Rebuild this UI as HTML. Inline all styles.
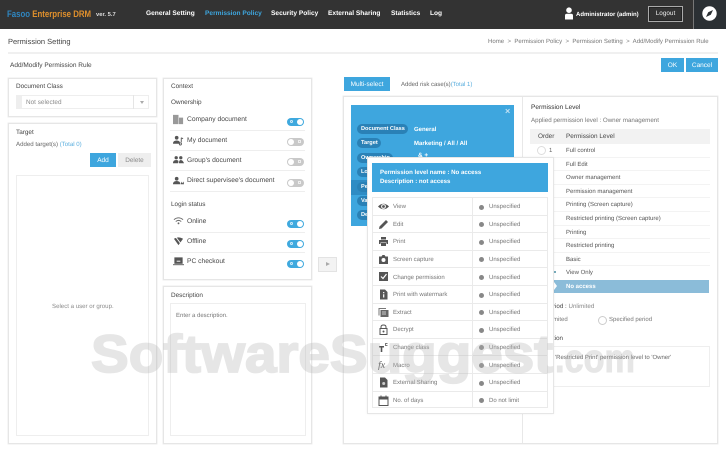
<!DOCTYPE html>
<html><head><meta charset="utf-8"><style>
html,body{margin:0;padding:0;background:#fff;}
#w{position:relative;width:726px;height:452px;overflow:hidden;background:#fff;font-family:"Liberation Sans",sans-serif;font-size:6.4px;color:#484848;filter:blur(.3px);text-rendering:geometricPrecision;}
.t{position:absolute;white-space:nowrap;line-height:8px;margin-top:1.3px;}
.b{position:absolute;box-sizing:border-box;}
.p{position:absolute;box-sizing:border-box;border:1px solid #e6e6e6;box-shadow:0 0 0 .5px #eee;background:#fff;}
.n{top:9px;font-size:6.6px;font-weight:bold;color:#fff;}
.l{position:absolute;height:1px;background:#eee;}
.tg{position:absolute;left:287px;width:17px;height:8px;border-radius:4px;background:#3fa9de;margin-top:.5px;}
.tg:after{content:"";position:absolute;right:1px;top:1px;width:6px;height:6px;border-radius:50%;background:#fff;}
.tg:before{content:"";position:absolute;left:3px;top:2.5px;width:3px;height:3px;box-sizing:border-box;border:.6px solid #cfeaf8;border-radius:50%;}
.tg.off{background:#c9c9c9;}
.tg.off:after{right:auto;left:1px;}
.tg.off:before{left:11px;border-radius:0;border-color:#eee;}
.btn{position:absolute;background:#3ea6de;color:#fff;text-align:center;box-sizing:border-box;font-size:6.5px;padding-top:1px;}
.pill{position:absolute;left:357px;height:10px;border-radius:5px;background:#2a81b6;color:#fff;font-weight:bold;font-size:5.6px;line-height:10.500px;padding-left:4px;box-sizing:border-box;white-space:nowrap;overflow:hidden;}
.pr{position:absolute;left:566px;color:#555;font-size:6px;white-space:nowrap;line-height:8px;margin-top:1px;}
.rl{position:absolute;left:530px;width:180px;height:1px;background:#f3f3f3;}
.r{position:absolute;left:372px;width:176px;height:17.6px;box-sizing:border-box;border:1px solid #eaeaea;border-bottom:0;background:#fff;}
.r:before{content:"";position:absolute;left:99px;top:0;bottom:0;width:1px;background:#eaeaea;}
.r span{position:absolute;top:5.300px;line-height:8px;color:#777;font-size:6px;white-space:nowrap;}
.r .a{left:20px;}
.r .c{left:116px;}
.r i{position:absolute;left:106px;top:6.500px;width:5px;height:5px;border-radius:50%;background:#888;}
.r svg{position:absolute;left:5px;top:3px;width:11px;height:11px;}
.ic{position:absolute;width:11px;height:11px;}
.c6{font-size:6.7px;}
</style></head><body><div id="w">

<div class="b" style="left:0;top:0;width:726px;height:29px;background:#333;"></div>
<div class="b" style="left:693px;top:0;width:1px;height:29px;background:#777;"></div>
<div class="b" style="left:694px;top:0;width:32px;height:29px;background:#2b3034;"></div>
<div class="t" style="left:7px;top:8.500px;font-size:9.500px;line-height:10px;font-weight:bold;transform:scaleX(.825);transform-origin:0 0;"><span style="color:#2f86c0;">Fasoo</span> <span style="color:#e0902c;">Enterprise DRM</span></div>
<div class="t" style="left:96px;top:10px;font-size:5.800px;font-weight:bold;color:#ddd;">ver. 5.7</div>
<div class="t n" style="left:146px;">General Setting</div>
<div class="t n" style="left:205px;color:#3ea6de;">Permission Policy</div>
<div class="t n" style="left:271px;">Security Policy</div>
<div class="t n" style="left:328px;">External Sharing</div>
<div class="t n" style="left:391px;">Statistics</div>
<div class="t n" style="left:430px;">Log</div>
<svg class="ic" style="left:563px;top:7px;width:12px;height:13px;" viewBox="0 0 12 13"><circle cx="6" cy="3.200" r="2.800" fill="#fff"/><path d="M2 12.500V8.500Q2 6.800 4 6.800H8Q10 6.800 10 8.500V12.500Z" fill="#fff"/></svg>
<div class="t" style="left:576px;top:9.500px;font-size:6px;font-weight:bold;color:#fff;">Administrator (admin)</div>
<div class="b" style="left:648px;top:6px;width:35px;height:16px;border:1px solid #aaa;outline:1px solid #222;outline-offset:-2px;color:#eee;text-align:center;line-height:14.500px;font-size:6.400px;">Logout</div>
<svg class="ic" style="left:702px;top:6px;width:15px;height:15px;" viewBox="0 0 15 15"><circle cx="7.500" cy="7.500" r="7.200" fill="#fff"/><path d="M11 4L8.800 8.800L4 11L6.200 6.200Z" fill="#2b3034"/></svg>

<div class="t" style="left:8px;top:37px;font-size:7.500px;color:#444;">Permission Setting</div>
<div class="t" style="left:488px;top:36.500px;color:#777;font-size:6.050px;">Home &nbsp;&gt;&nbsp; Permission Policy &nbsp;&gt;&nbsp; Permission Setting &nbsp;&gt;&nbsp; Add/Modify Permission Rule</div>
<div class="b" style="left:8px;top:52px;width:710px;height:2px;background:#f0f0f0;"></div>
<div class="t" style="left:10px;top:60.500px;color:#444;font-size:6.500px;">Add/Modify Permission Rule</div>
<div class="btn" style="left:661px;top:58px;width:23px;height:14px;line-height:14px;">OK</div>
<div class="btn" style="left:686px;top:58px;width:32px;height:14px;line-height:14px;">Cancel</div>

<!-- Document class -->
<div class="p" style="left:8px;top:78px;width:149px;height:39px;"></div>
<div class="t" style="left:16px;top:82px;color:#444;">Document Class</div>
<div class="b" style="left:16px;top:95px;width:133px;height:14px;border:1px solid #eee;"></div>
<div class="b" style="left:16px;top:95px;width:6px;height:14px;background:#eee;"></div>
<div class="b" style="left:133px;top:95px;width:1px;height:14px;background:#e5e5e5;"></div>
<div class="t" style="left:26px;top:98px;color:#8a8a8a;">Not selected</div>
<div class="b" style="left:139.500px;top:101px;width:0;height:0;border:2px solid transparent;border-top:3px solid #aaa;"></div>

<!-- Target -->
<div class="p" style="left:8px;top:123px;width:149px;height:321px;"></div>
<div class="t" style="left:16px;top:127.500px;color:#444;">Target</div>
<div class="t" style="left:16px;top:140px;color:#666;font-size:6.100px;">Added target(s) <span style="color:#5aaede;">(Total 0)</span></div>
<div class="btn" style="left:90px;top:153px;width:26px;height:14px;line-height:14px;">Add</div>
<div class="b" style="left:118px;top:153px;width:33px;height:14px;line-height:15px;background:#eee;color:#888;text-align:center;">Delete</div>
<div class="b" style="left:16px;top:175px;width:133px;height:261px;border:1px solid #eee;"></div>
<div class="t" style="left:52px;top:301.500px;color:#8a8a8a;font-size:6.100px;">Select a user or group.</div>

<!-- Context -->
<div class="p" style="left:163px;top:78px;width:149px;height:202px;"></div>
<div class="t" style="left:171px;top:81.500px;color:#444;">Context</div>
<div class="t" style="left:171px;top:97.500px;color:#444;">Ownership</div>
<svg class="ic" style="left:173px;top:114px;" viewBox="0 0 12 12"><path d="M0 1H6V11H0ZM6.500 4H11V11H6.500Z" fill="#999"/></svg>
<div class="t c6" style="left:187px;top:115px;">Company document</div><div class="tg" style="top:117px;"></div>
<div class="l" style="left:170px;width:135px;top:130px;"></div>
<svg class="ic" style="left:173px;top:135px;" viewBox="0 0 12 12"><circle cx="4" cy="3" r="2" fill="#555"/><path d="M0 9.500Q0 6 4 6T7.500 9.500Z" fill="#555"/><path d="M9 3V8M8 8.500a1.200 1.200 0 1 0 .1 0M9 3L11 4" stroke="#555" stroke-width="1" fill="none"/></svg>
<div class="t c6" style="left:187px;top:136px;">My document</div><div class="tg off" style="top:137px;"></div>
<div class="l" style="left:170px;width:135px;top:150px;"></div>
<svg class="ic" style="left:173px;top:155px;" viewBox="0 0 12 12"><circle cx="3.500" cy="3" r="1.800" fill="#555"/><circle cx="8.500" cy="3" r="1.800" fill="#555"/><path d="M0 9Q0 5.500 3.500 5.500T5.500 9ZM6.500 9Q6.500 5.500 8.500 5.500T12 9Z" fill="#555"/></svg>
<div class="t c6" style="left:187px;top:156px;">Group's document</div><div class="tg off" style="top:157px;"></div>
<div class="l" style="left:170px;width:135px;top:170px;"></div>
<svg class="ic" style="left:173px;top:176px;" viewBox="0 0 12 12"><circle cx="4" cy="3" r="2" fill="#555"/><path d="M0 9Q0 5.500 4 5.500T8 9ZM8.500 9L9 6L10 8L11.500 6L12 9Z" fill="#555"/></svg>
<div class="t c6" style="left:187px;top:176px;">Direct supervisee's document</div><div class="tg off" style="top:178px;"></div>
<div class="l" style="left:170px;width:135px;top:191px;"></div>
<div class="t" style="left:171px;top:200px;color:#444;">Login status</div>
<svg class="ic" style="left:173px;top:216px;" viewBox="0 0 12 12"><path d="M1 4Q6 0 11 4M3 6Q6 3.500 9 6" stroke="#666" fill="none"/><circle cx="6" cy="8" r="1" fill="#666"/></svg>
<div class="t c6" style="left:187px;top:216.500px;">Online</div><div class="tg" style="top:219px;"></div>
<div class="l" style="left:170px;width:135px;top:232px;"></div>
<svg class="ic" style="left:173px;top:236px;" viewBox="0 0 12 12"><path d="M1 3Q6 0 11 3L6 10Z" fill="#555"/><path d="M3 1L9 9" stroke="#fff"/></svg>
<div class="t c6" style="left:187px;top:236.500px;">Offline</div><div class="tg" style="top:239px;"></div>
<div class="l" style="left:170px;width:135px;top:252px;"></div>
<svg class="ic" style="left:173px;top:256px;" viewBox="0 0 12 12"><path d="M1.500 1.500H10.500V8.500H1.500Z" fill="#555"/><path d="M0 9H12V10H0Z" fill="#555"/><path d="M4 5H8V6.500H4Z" fill="#ccc"/></svg>
<div class="t c6" style="left:187px;top:256.500px;">PC checkout</div><div class="tg" style="top:259px;"></div>

<div class="b" style="left:318px;top:257px;width:19px;height:15px;background:#f3f3f3;border:1px solid #e3e3e3;"></div>
<div class="b" style="left:326px;top:262px;width:0;height:0;border:2.500px solid transparent;border-left:4px solid #aaa;"></div>

<!-- Description -->
<div class="p" style="left:163px;top:286px;width:149px;height:158px;"></div>
<div class="t" style="left:171px;top:291px;color:#444;">Description</div>
<div class="b" style="left:170px;top:303px;width:136px;height:133px;border:1px solid #eee;"></div>
<div class="t" style="left:176px;top:311px;color:#777;font-size:6px;">Enter a description.</div>

<!-- Main right -->
<div class="btn" style="left:344px;top:77px;width:46px;height:14px;line-height:14px;">Multi-select</div>
<div class="t" style="left:401px;top:80px;color:#666;font-size:6px;">Added risk case(s)<span style="color:#5aaede;">(Total 1)</span></div>
<div class="p" style="left:343px;top:96px;width:375px;height:348px;"></div>
<div class="b" style="left:522px;top:97px;width:1px;height:346px;background:#e8e8e8;"></div>

<div class="b" style="left:351px;top:105px;width:163px;height:121px;background:#3ea6de;"></div>
<div class="t" style="left:505px;top:106px;color:#bfe0f3;font-size:9px;font-weight:bold;">×</div>
<div class="pill" style="top:124px;width:51px;">Document Class</div>
<div class="t" style="left:414px;top:124.500px;color:#fff;font-weight:bold;font-size:6px;">General</div>
<div class="pill" style="top:138px;width:24px;">Target</div>
<div class="t" style="left:414px;top:138.500px;color:#fff;font-weight:bold;font-size:6px;">Marketing / All / All</div>
<div class="pill" style="top:153px;width:36px;">Ownership</div>
<div class="t" style="left:418px;top:151px;color:#fff;font-weight:bold;">&amp; +</div>
<div class="pill" style="top:167px;width:20px;">Lo</div>
<div class="b" style="left:351px;top:180px;width:16px;height:15px;background:#2f8cc4;"></div>
<div class="pill" style="top:182px;width:20px;">Pe</div>
<div class="pill" style="top:196px;width:20px;">Va</div>
<div class="pill" style="top:210px;width:20px;">De</div>

<!-- Permission level -->
<div class="t" style="left:531px;top:102.500px;color:#333;font-size:6.500px;">Permission Level</div>
<div class="t" style="left:531px;top:115.500px;color:#777;font-size:6.200px;">Applied permission level : Owner management</div>
<div class="b" style="left:530px;top:129px;width:180px;height:15px;background:#f2f2f2;"></div>
<div class="t" style="left:538px;top:132px;color:#444;">Order</div>
<div class="t" style="left:566px;top:132px;color:#444;">Permission Level</div>
<div class="b" style="left:536.500px;top:146px;width:9px;height:9px;border:1px solid #ddd;border-radius:50%;"></div>
<div class="t" style="left:549px;top:145.500px;color:#666;font-size:6px;">1</div>
<div class="pr" style="top:146px;">Full control</div><div class="rl" style="top:157px;"></div>
<div class="pr" style="top:159.500px;">Full Edit</div><div class="rl" style="top:170px;"></div>
<div class="pr" style="top:173px;">Owner management</div><div class="rl" style="top:184px;"></div>
<div class="pr" style="top:186.500px;">Permission management</div><div class="rl" style="top:197px;"></div>
<div class="pr" style="top:200px;">Printing (Screen capture)</div><div class="rl" style="top:211px;"></div>
<div class="pr" style="top:213.500px;">Restricted printing (Screen capture)</div><div class="rl" style="top:225px;"></div>
<div class="pr" style="top:227.500px;">Printing</div><div class="rl" style="top:238px;"></div>
<div class="pr" style="top:241px;">Restricted printing</div><div class="rl" style="top:252px;"></div>
<div class="pr" style="top:254.500px;">Basic</div><div class="rl" style="top:265px;"></div>
<div class="pr" style="top:268px;">View Only</div>
<div class="b" style="left:554px;top:271px;width:1.500px;height:2px;background:#7ab;"></div>
<div class="b" style="left:554px;top:280px;width:155px;height:13px;background:#8bbcd9;"></div>
<div class="b" style="left:554px;top:282px;width:0;height:0;border-top:4.500px solid transparent;border-bottom:4.500px solid transparent;border-left:3px solid #fff;"></div>
<div class="pr" style="top:282px;color:#fff;font-weight:bold;">No access</div>

<div class="t" style="left:553px;top:301.500px;color:#444;font-size:6.200px;">riod : <span style="color:#888;">Unlimited</span></div>
<div class="t" style="left:553px;top:315px;color:#777;font-size:6px;">mited</div>
<div class="b" style="left:597.500px;top:315.500px;width:9px;height:9px;border:1px solid #ccc;border-radius:50%;"></div>
<div class="t" style="left:609px;top:315px;color:#777;font-size:6px;">Specified period</div>
<div class="t" style="left:553px;top:333.500px;color:#444;font-size:6.200px;">tion</div>
<div class="b" style="left:540px;top:346px;width:170px;height:41px;border:1px solid #eee;"></div>
<div class="t" style="left:555px;top:352.500px;color:#666;font-size:6px;">'Restricted Print' permission level to 'Owner'</div>

<!-- Popup -->
<div class="b" style="left:367px;top:157px;width:187px;height:257px;background:#fff;border:1px solid #e6e6e6;box-shadow:0 0 2px rgba(0,0,0,.06);"></div>
<div class="b" style="left:372px;top:163px;width:176px;height:29px;background:#3ea6de;"></div>
<div class="t" style="left:380px;top:167.500px;color:#fff;font-weight:bold;font-size:6.100px;">Permission level name : No access</div>
<div class="t" style="left:380px;top:176.500px;color:#fff;font-weight:bold;font-size:6.100px;">Description : not access</div>

<div class="r" style="top:197px;"><svg viewBox="0 0 11 11"><path d="M0 5.500Q5.500 0 11 5.500Q5.500 11 0 5.500Z" fill="#555"/><circle cx="5.500" cy="5.500" r="2.400" fill="#fff"/><circle cx="5.500" cy="5.500" r="1.400" fill="#555"/></svg><span class="a">View</span><i></i><span class="c">Unspecified</span></div>
<div class="r" style="top:214.600px;"><svg viewBox="0 0 11 11"><path d="M1 10L1.500 7.500L8 1L10 3L3.500 9.500Z" fill="#555"/></svg><span class="a">Edit</span><i></i><span class="c">Unspecified</span></div>
<div class="r" style="top:232.200px;"><svg viewBox="0 0 11 11"><path d="M3 1H8V3.500H3ZM1 4H10V8H8.500V6.500H2.500V8H1ZM3 7H8V10H3Z" fill="#555"/></svg><span class="a">Print</span><i></i><span class="c">Unspecified</span></div>
<div class="r" style="top:249.800px;"><svg viewBox="0 0 11 11"><path d="M1 2.500H3.500L4.500 1H6.500L7.500 2.500H10V10H1Z" fill="#555"/><circle cx="5.500" cy="6" r="2" fill="#fff"/></svg><span class="a">Screen capture</span><i></i><span class="c">Unspecified</span></div>
<div class="r" style="top:267.400px;"><svg viewBox="0 0 11 11"><path d="M1 1H10V10H1Z" fill="#555"/><path d="M3 5.500L5 7.500L8.500 3" stroke="#fff" stroke-width="1.200" fill="none"/></svg><span class="a">Change permission</span><i></i><span class="c">Unspecified</span></div>
<div class="r" style="top:285px;"><svg viewBox="0 0 11 11"><path d="M2 0.500H7L9.500 3V10.500H2Z" fill="#555"/><path d="M5.700 3V4.200M5.700 5.200V8.500" stroke="#fff" stroke-width="1.200"/></svg><span class="a">Print with watermark</span><i></i><span class="c">Unspecified</span></div>
<div class="r" style="top:302.600px;"><svg viewBox="0 0 11 11"><path d="M0.500 1H8V2H1.500V8.500H0.500Z" fill="#777"/><path d="M2.500 3H10.500V10H2.500Z" fill="#666"/><path d="M4 5H8M4 7H8" stroke="#ccc"/></svg><span class="a">Extract</span><i></i><span class="c">Unspecified</span></div>
<div class="r" style="top:320.200px;"><svg viewBox="0 0 11 11"><path d="M3 5V3Q3 1 5.500 1T8 3V4" stroke="#555" fill="none"/><path d="M2 4.500H9V10.500H2Z" stroke="#555" fill="#fff"/><circle cx="5.500" cy="7.500" r="1" fill="#555"/></svg><span class="a">Decrypt</span><i></i><span class="c">Unspecified</span></div>
<div class="r" style="top:337.800px;"><svg viewBox="0 0 11 11"><path d="M1 4H6V5.500H4.300V10H2.700V5.500H1Z" fill="#555"/><path d="M7 1H9.500V2H8V3H9.500V4H7Z" fill="#777"/></svg><span class="a">Change class</span><i></i><span class="c">Unspecified</span></div>
<div class="r" style="top:355.400px;"><svg viewBox="0 0 11 11"><text x="0" y="9" font-family="Liberation Serif,serif" font-style="italic" font-size="10" fill="#555">fx</text></svg><span class="a">Macro</span><i></i><span class="c">Unspecified</span></div>
<div class="r" style="top:373px;"><svg viewBox="0 0 11 11"><path d="M2 0.500H7L9.500 3V10.500H2Z" fill="#555"/><circle cx="5.700" cy="6.500" r="1.500" fill="#ccc"/></svg><span class="a">External Sharing</span><i></i><span class="c">Unspecified</span></div>
<div class="r" style="top:390.600px;height:17.400px;border-bottom:1px solid #eaeaea;"><svg viewBox="0 0 11 11"><path d="M1 2H10V10.500H1Z" stroke="#555" fill="#fff"/><path d="M1 2H10V4.500H1Z" fill="#555"/><path d="M3 0.500V2.500M8 0.500V2.500" stroke="#555"/></svg><span class="a">No. of days</span><i></i><span class="c">Do not limit</span></div>

<!-- Watermark -->
<svg style="position:absolute;left:0;top:0;" width="726" height="452" viewBox="0 0 726 452">
<text x="91" y="372" font-family="Liberation Sans,sans-serif" font-weight="bold" font-size="53" textLength="462" lengthAdjust="spacingAndGlyphs" fill="#b4b4b4" stroke="#b4b4b4" stroke-width="1.800" opacity=".33">SoftwareSuggest</text>
<text x="555" y="372" font-family="Liberation Sans,sans-serif" font-weight="bold" font-size="40" textLength="80" lengthAdjust="spacingAndGlyphs" fill="#b4b4b4" stroke="#b4b4b4" stroke-width="1" opacity=".33">.com</text>
</svg>
</div></body></html>
